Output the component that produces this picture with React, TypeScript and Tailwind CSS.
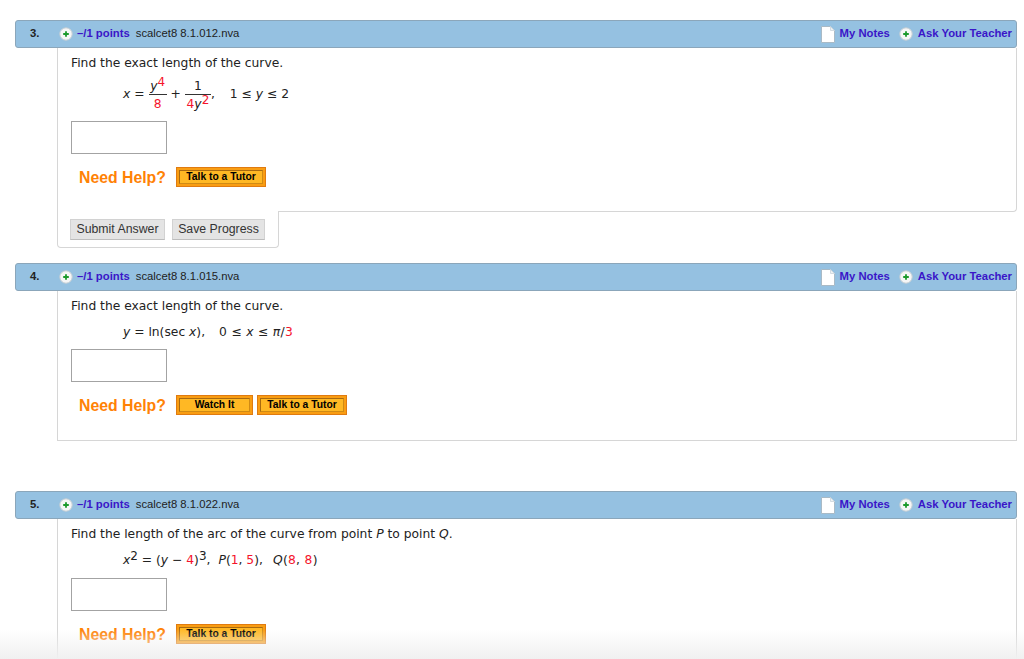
import type { ReactNode } from "react";

const R = ({ children }: { children: ReactNode }) => <span className="text-[#f5132b]">{children}</span>;
const V = ({ children }: { children: ReactNode }) => <i>{children}</i>;
const Sup = ({ children }: { children: ReactNode }) => <span className="relative -top-[4px] text-[12px] leading-none">{children}</span>;

// Round white button with the little green plus.
function PlusIcon() {
  return (
    <svg width="14" height="14" viewBox="0 0 14 14" className="shrink-0">
      <circle cx="7" cy="7" r="6.2" fill="#f6f6f6" stroke="#c4cdd3" strokeWidth="1" />
      <path d="M7 4.2v5.6M4.2 7h5.6" stroke="#1c9a2c" strokeWidth="1.8" />
    </svg>
  );
}

function NoteIcon() {
  return (
    <svg width="14" height="17" viewBox="0 0 14 17" className="shrink-0">
      <path d="M.5.5h9l4 4v12H.5z" fill="#fff" stroke="#a9bac6" />
      <path d="M9.5.5v4h4" fill="#eef1f3" stroke="#d3dbe1" />
    </svg>
  );
}

function OrangeButton({ label, width }: { label: string; width: string }) {
  return (
    <div className={`h-5 ${width} border border-[#e07b10] bg-[#f99d12] p-[2px] font-['Liberation_Sans',Arial,sans-serif]`}>
      <div className="flex h-full items-center justify-center whitespace-nowrap border border-[#d08a14] border-t-[#a96a10] border-l-[#a96a10] bg-[#ffb824] pt-px text-[10.3px] font-bold leading-none text-black">
        {label}
      </div>
    </div>
  );
}

function GrayButton({ label, width }: { label: string; width: string }) {
  return (
    <div className={`flex h-[21px] ${width} items-center justify-center border border-[#d2d2d2] border-b-[#bdbdbd] bg-[#e4e4e4] text-[12.3px] leading-none text-[#333]`}>
      {label}
    </div>
  );
}

function Header({ num, file }: { num: string; file: string }) {
  return (
    <div className="flex h-[28px] items-center rounded-[3px] border border-[#8ba6ba] bg-[#95c1e1] text-[11.3px] leading-none">
      <div className="w-[43px] pl-[14px] font-bold text-[#222]">{num}</div>
      <PlusIcon />
      <span className="ml-[4px] font-bold text-[#3a16c8]">–/1 points</span>
      <span className="ml-[6px] text-[#222]">{file}</span>
      <div className="ml-auto flex items-center pr-[4px] font-bold text-[#3a16c8]">
        <NoteIcon />
        <span className="ml-[5px]">My Notes</span>
        <span className="ml-[9px]"><PlusIcon /></span>
        <span className="ml-[5px]">Ask Your Teacher</span>
      </div>
    </div>
  );
}

function Help({ children }: { children: ReactNode }) {
  return (
    <div className="mt-[13px] flex items-start pl-[8px]">
      <span className="w-[97px] whitespace-nowrap pt-px font-['Liberation_Sans',Arial,sans-serif] text-[15.8px] font-bold leading-5 text-[#ff8205]">Need Help?</span>
      <div className="flex gap-[4px]">{children}</div>
    </div>
  );
}

function AnswerBox({ mt }: { mt: string }) {
  return <div className={`${mt} h-[33px] w-[96px] border border-[#a3a3a3] bg-white`} />;
}

const bodyText = "text-[12.3px] leading-[14px] text-[#222]";

export default function App() {
  return (
    <div className="relative h-[659px] overflow-hidden bg-white pl-[15px] pr-[7px] pt-[20px] font-['Liberation_Sans',Arial,sans-serif]">
      {/* question 3 */}
      <Header num="3." file="scalcet8 8.1.012.nva" />
      <div className="ml-[42px] h-[164px] rounded-br-[4px] border-x border-b border-[#d6d6d6] pl-[13px] font-['DejaVu_Sans',sans-serif]">
        <div className={`pt-[8px] ${bodyText}`}>Find the exact length of the curve.</div>
        <div className="mt-[5px] flex h-[39px] items-center pl-[52px] text-[12.3px] leading-none text-[#222]">
          <V>x</V>
          <span className="ml-[4px]">=</span>
          <span className="ml-[4px] inline-flex w-[18px] flex-col items-center">
            <span className="h-[16px] w-full whitespace-nowrap border-b border-[#333] pt-[1px] text-center">
              <V>y</V><R><Sup>4</Sup></R>
            </span>
            <span className="pt-[3px]"><R>8</R></span>
          </span>
          <span className="ml-[4px]">+</span>
          <span className="ml-[4px] inline-flex w-[26px] flex-col items-center">
            <span className="h-[16px] w-full border-b border-[#333] pt-[1px] text-center">1</span>
            <span className="whitespace-nowrap pt-[3px]"><R>4</R><V>y</V><R><Sup>2</Sup></R></span>
          </span>
          <span>,</span>
          <span className="ml-[15px] whitespace-nowrap">1 ≤ <V>y</V> ≤ 2</span>
        </div>
        <AnswerBox mt="mt-[7px]" />
        <Help>
          <OrangeButton label="Talk to a Tutor" width="w-[90px]" />
        </Help>
      </div>
      <div className="relative z-10 -mt-px ml-[42px] flex h-[37px] w-[222px] gap-[7px] rounded-b-[4px] border-x border-b border-[#d6d6d6] bg-white pl-[12px] pt-[8px]">
        <GrayButton label="Submit Answer" width="w-[95px]" />
        <GrayButton label="Save Progress" width="w-[93px]" />
      </div>

      {/* question 4 */}
      <div className="mt-[15px]">
        <Header num="4." file="scalcet8 8.1.015.nva" />
      </div>
      <div className="ml-[42px] h-[150px] border-x border-b border-[#d6d6d6] pl-[13px] font-['DejaVu_Sans',sans-serif]">
        <div className={`pt-[8px] ${bodyText}`}>Find the exact length of the curve.</div>
        <div className={`mt-[12px] pl-[52px] ${bodyText}`}>
          <V>y</V> = ln(sec <V>x</V>),<span className="ml-[14px] tracking-[0.3px]">0 ≤ <V>x</V> ≤ <V>π</V>/<R>3</R></span>
        </div>
        <AnswerBox mt="mt-[10px]" />
        <Help>
          <OrangeButton label="Watch It" width="w-[77px]" />
          <OrangeButton label="Talk to a Tutor" width="w-[90px]" />
        </Help>
      </div>

      {/* question 5 */}
      <div className="mt-[50px]">
        <Header num="5." file="scalcet8 8.1.022.nva" />
      </div>
      <div className="ml-[42px] h-[200px] border-x border-[#d6d6d6] pl-[13px] font-['DejaVu_Sans',sans-serif]">
        <div className={`pt-[8px] ${bodyText}`}>
          Find the length of the arc of the curve from point <V>P</V> to point <V>Q</V>.
        </div>
        <div className={`mt-[12px] pl-[52px] ${bodyText}`}>
          <V>x</V><Sup>2</Sup> = (<V>y</V> − <R>4</R>)<Sup>3</Sup>,
          <span className="ml-[8px]"><V>P</V>(<R>1</R>, <R>5</R>),</span>
          <span className="ml-[10px] tracking-[0.3px]"><V>Q</V>(<R>8</R>, <R>8</R>)</span>
        </div>
        <AnswerBox mt="mt-[11px]" />
        <Help>
          <OrangeButton label="Talk to a Tutor" width="w-[90px]" />
        </Help>
      </div>

      {/* soft fade along the bottom edge of the window */}
      <div className="pointer-events-none absolute inset-x-0 bottom-0 h-[30px] bg-gradient-to-b from-transparent to-[#f0f0f0]" />
    </div>
  );
}
